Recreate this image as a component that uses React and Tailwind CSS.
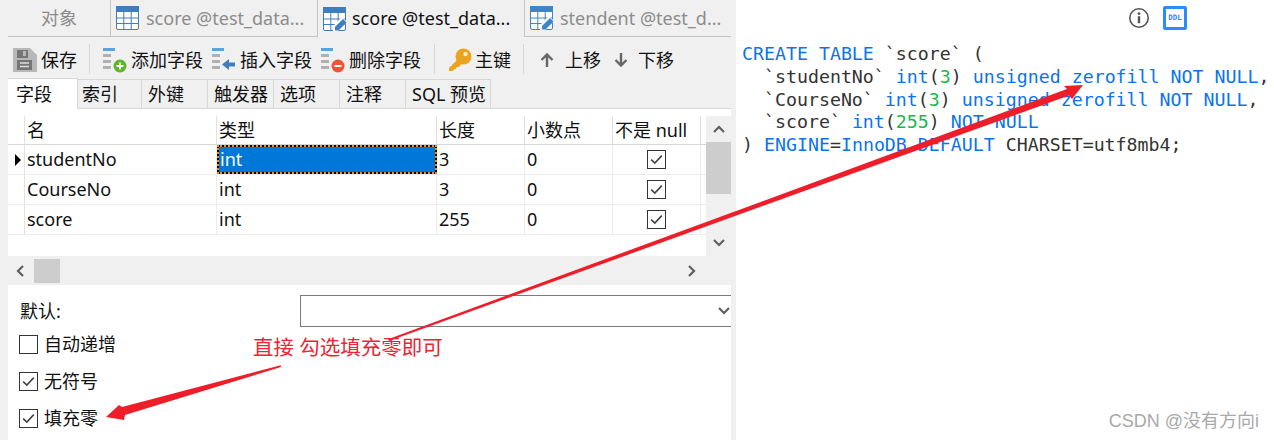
const uiFont = { fontFamily: '"Noto Sans", "Noto Sans CJK SC", sans-serif' };

function TableIcon({ edit = false, dim = false }) {
  const c = dim ? "#3d87c9" : "#3d7fbd";
  return (
    <svg width="26" height="26" viewBox="0 0 26 26" className="shrink-0">
      <rect x="1.5" y="1.5" width="22" height="23" rx="1.5" fill="#fff" stroke={c} />
      <rect x="1" y="1" width="23" height="6" fill={c} />
      <path d="M1.5 13h22M1.5 18.5h22M8.8 7v17M16.2 7v17" stroke={c} strokeWidth="1" fill="none" />
      {edit && (
        <>
          <path d="M11 25v-5L20 11l5 5-9 9z" fill="#fff" />
          <path d="M13 24.5v-3.5l8-8 3.5 3.5-8 8z" fill={c} />
        </>
      )}
    </svg>
  );
}

function FieldIcon({ children }) {
  return (
    <svg width="26" height="26" viewBox="0 0 26 26" className="shrink-0">
      <rect x="1" y="1" width="12" height="3" fill="#59a5df" />
      <rect x="1" y="7" width="8" height="3" fill="#b0b0b0" />
      <rect x="1" y="13" width="8" height="3" fill="#b0b0b0" />
      <rect x="1" y="19" width="8" height="3" fill="#b0b0b0" />
      {children}
    </svg>
  );
}

function Tool({ icon, label, className = "" }) {
  return (
    <div className={"flex items-center gap-[3px] text-[18px] text-[#111] " + className}>
      {icon}
      <span>{label}</span>
    </div>
  );
}

function Check({ checked = true, className = "" }) {
  return (
    <span className={"flex h-[19px] w-[19px] shrink-0 items-center justify-center border border-[#333] bg-white " + className}>
      {checked && (
        <svg width="13" height="11" viewBox="0 0 13 11">
          <path d="M1.2 5.6 4.8 9 11.8 1.6" fill="none" stroke="#444" strokeWidth="1.6" />
        </svg>
      )}
    </span>
  );
}

function Chevron({ d, className = "", w = 12, h = 10 }) {
  return (
    <svg width={w} height={h} viewBox={`0 0 ${w} ${h}`} className={className}>
      <path d={d} fill="none" stroke="#606060" strokeWidth="2.2" />
    </svg>
  );
}

const rows = [
  { name: "studentNo", len: "3", selected: true },
  { name: "CourseNo", len: "3" },
  { name: "score", len: "255" },
];

const subTabs = [
  ["索引", "w-[64px] pl-[4px]"],
  ["外键", "w-[66px] pl-[6px]"],
  ["触发器", "w-[66px] pl-[6px]"],
  ["选项", "w-[66px] pl-[6px]"],
  ["注释", "w-[66px] pl-[6px]"],
  ["SQL 预览", "w-[85px] pl-[6px]"],
];

const cols = "grid grid-cols-[17px_192px_220px_88px_88px_88px_5px]";

function FieldTable() {
  return (
    <div className="h-[147px] w-[698px] bg-white pt-[7px] text-[18px] text-[#111]">
      <div className={cols + " h-[29px] border-b border-[#d8d8d8]"}>
        <div className="border-r border-[#e2e2e2]" />
        {["名", "类型", "长度", "小数点", "不是 null"].map((h) => (
          <div key={h} className="border-r border-[#e2e2e2] pl-[2px] leading-[28px]">{h}</div>
        ))}
        <div />
      </div>
      {rows.map((r) => (
        <div key={r.name} className={cols + " h-[30px] border-b border-[#ececec]"}>
          <div className="flex items-center justify-end border-r border-[#e2e2e2] pr-[3px]">
            {r.selected && <span className="h-0 w-0 border-y-[6px] border-l-[6px] border-y-transparent border-l-black" />}
          </div>
          <div className="border-r border-[#ececec] pl-[2px] leading-[29px]">{r.name}</div>
          {r.selected ? (
            <div className="h-[29px] border-2 border-dotted border-[#f08a1d] bg-black">
              <div className="h-full bg-[#0078d7] pl-[1px] leading-[25px] text-white">int</div>
            </div>
          ) : (
            <div className="border-r border-[#ececec] pl-[2px] leading-[29px]">int</div>
          )}
          <div className="border-r border-[#ececec] pl-[2px] leading-[29px]">{r.len}</div>
          <div className="border-r border-[#ececec] pl-[2px] leading-[29px]">0</div>
          <div className="flex items-center justify-center border-r border-[#ececec]"><Check /></div>
          <div />
        </div>
      ))}
    </div>
  );
}

function LeftPanel() {
  return (
    <div className="flex h-[440px] w-[736px] shrink-0 flex-col bg-[#f0f0f0] pl-2 pr-[5px]" style={uiFont}>
      {/* top tabs */}
      <div className="flex h-[37px] w-[723px] border-b border-[#c4c4c4] text-[18px]">
        <div className="flex w-[103px] items-center justify-center border-r border-[#c4c4c4] text-[#8c8c8c]">对象</div>
        <div className="flex w-[207px] items-center gap-[5px] border-r border-[#c4c4c4] pl-[4px] text-[#8c8c8c]">
          <TableIcon />
          <span>score @test_data...</span>
        </div>
        <div className="-mb-px flex w-[206px] items-center gap-[4px] bg-[#f0f0f0] pl-[4px] text-[#111]">
          <TableIcon edit />
          <span>score @test_data...</span>
        </div>
        <div className="flex w-[207px] items-center gap-[5px] border-l border-[#c4c4c4] pl-[4px] text-[#8c8c8c]">
          <TableIcon edit dim />
          <span>stendent @test_d...</span>
        </div>
      </div>

      {/* toolbar */}
      <div className="flex h-[42px] items-center pl-[5px] pt-[4px]">
        <Tool
          label="保存"
          className="gap-[4px]"
          icon={
            <svg width="24" height="24" viewBox="0 0 24 24" className="shrink-0">
              <path d="M0 0h17l7 7v17H0z" fill="#b8b8b8" />
              <rect x="4" y="2" width="11" height="8" fill="#757575" />
              <rect x="10" y="3" width="3" height="5" fill="#b8b8b8" />
              <rect x="4" y="12" width="15" height="10" fill="#757575" />
              <path d="M7 15h9M7 18.5h9" stroke="#ddd" strokeWidth="1.5" />
            </svg>
          }
        />
        <div className="-mt-[2px] ml-[12px] h-[30px] w-px bg-[#d8d8d8]" />
        <Tool
          className="ml-[12px]"
          label="添加字段"
          icon={
            <FieldIcon>
              <circle cx="18" cy="19" r="6.5" fill="#5db52f" />
              <path d="M14.5 19h7M18 15.5v7" stroke="#fff" strokeWidth="1.8" />
            </FieldIcon>
          }
        />
        <Tool
          className="ml-[8px]"
          label="插入字段"
          icon={
            <FieldIcon>
              <path d="M11 17.5 18 12v3.5h6v4h-6V23z" fill="#3d7fbd" />
            </FieldIcon>
          }
        />
        <Tool
          className="ml-[8px]"
          label="删除字段"
          icon={
            <FieldIcon>
              <circle cx="18" cy="19" r="6.5" fill="#ef5338" />
              <path d="M14.5 19h7" stroke="#fff" strokeWidth="2" />
            </FieldIcon>
          }
        />
        <div className="-mt-[2px] ml-[13px] h-[30px] w-px bg-[#d8d8d8]" />
        <Tool
          className="ml-[13px]"
          label="主键"
          icon={
            <svg width="24" height="24" viewBox="0 0 24 24" className="shrink-0">
              <circle cx="15.5" cy="8.5" r="8" fill="#eba41f" />
              <circle cx="17.5" cy="6" r="2.2" fill="#fbe9bf" />
              <path d="M10 11 1 20v3h4l1-2h2l1-2h2l3-4z" fill="#eba41f" />
            </svg>
          }
        />
        <div className="-mt-[2px] ml-[12px] h-[30px] w-px bg-[#d8d8d8]" />
        <Tool
          className="ml-[16px] gap-[11px]"
          label="上移"
          icon={
            <svg width="14" height="14" viewBox="0 0 14 14" className="shrink-0">
              <path d="M1.5 7 7 1.5 12.5 7M7 2v12" fill="none" stroke="#666" strokeWidth="2.4" />
            </svg>
          }
        />
        <Tool
          className="ml-[13px] gap-[10px]"
          label="下移"
          icon={
            <svg width="14" height="14" viewBox="0 0 14 14" className="shrink-0">
              <path d="M1.5 7 7 12.5 12.5 7M7 12V0" fill="none" stroke="#666" strokeWidth="2.4" />
            </svg>
          }
        />
      </div>

      {/* field tabs */}
      <div className="flex h-[30px] w-[723px] items-end border-b border-[#d8d8d8] text-[18px] text-[#111]">
        <div className="-mb-px flex h-[31px] w-[70px] items-center border-r border-t border-[#d8d8d8] bg-white pl-[8px]">字段</div>
        {subTabs.map(([t, w]) => (
          <div key={t} className={"flex h-[29px] items-center border-r border-t border-[#d8d8d8] " + w}>{t}</div>
        ))}
      </div>

      {/* table with its scroll bars */}
      <div className="flex h-[176px] w-[723px] bg-[#f0f0f0]">
        <div className="flex w-[698px] flex-col">
          <FieldTable />
          <div className="flex h-[29px] items-center">
            <Chevron w={10} h={14} d="M8 2 3 7l5 5" className="ml-[7px]" />
            <div className="ml-[9px] h-[24px] w-[26px] bg-[#cdcdcd]" />
            <Chevron w={10} h={14} d="M2 2l5 5-5 5" className="ml-[627px]" />
          </div>
        </div>
        <div className="flex w-[25px] flex-col">
          <div className="h-[7px] bg-white" />
          <div className="flex h-[26px] items-center justify-center"><Chevron d="M1 8l5-5 5 5" /></div>
          <div className="h-[52px] bg-[#cdcdcd]" />
          <div className="mt-[36px] flex h-[26px] items-center justify-center"><Chevron d="M1 2l5 5 5-5" /></div>
        </div>
      </div>

      {/* options */}
      <div className="flex-1 overflow-hidden bg-white text-[18px] text-[#111]">
        <div className="mt-[10px] flex h-[32px] items-center pl-[12px]">
          <span className="w-[280px]">默认:</span>
          <div className="flex h-[32px] flex-1 items-center justify-end border border-r-0 border-[#7a7a7a] pr-[1px]">
            <Chevron d="M1 2l5 5 5-5" />
          </div>
        </div>
        <div className="mt-[6px] flex h-[22px] items-center gap-[6px] pl-[11px]"><Check checked={false} />自动递增</div>
        <div className="mt-[15px] flex h-[22px] items-center gap-[6px] pl-[11px]"><Check />无符号</div>
        <div className="mt-[15px] flex h-[22px] items-center gap-[6px] pl-[11px]"><Check />填充零</div>
      </div>
    </div>
  );
}

const K = ({ children }) => <span className="text-[#0a74f0]">{children}</span>;
const N = ({ children }) => <span className="text-[#19b84a]">{children}</span>;

function RightPanel() {
  return (
    <div className="relative flex-1 bg-white">
      <div className="flex h-[36px] items-center justify-end gap-[13px] pr-[87px]">
        <svg width="22" height="22" viewBox="0 0 22 22">
          <circle cx="11" cy="11" r="9.2" fill="none" stroke="#555" strokeWidth="1.6" />
          <circle cx="11" cy="6.6" r="1.4" fill="#555" />
          <rect x="9.8" y="9.2" width="2.4" height="7" fill="#555" />
        </svg>
        <div className="flex h-[24px] w-[24px] items-center justify-center rounded-[2px] border-[3px] border-[#2b8cff] text-[7.5px] font-bold leading-none text-[#2b8cff]" style={{ fontFamily: '"DejaVu Sans Mono", monospace' }}>
          DDL
        </div>
      </div>
      <pre className="mt-[7px] pl-[6px] text-[18.26px] leading-[22.8px] text-[#333]" style={{ fontFamily: '"DejaVu Sans Mono", monospace' }}>
        <K>CREATE TABLE</K>{" `score` (\n"}
        {"  `studentNo` "}<K>int</K>(<N>3</N>) <K>unsigned zerofill NOT NULL</K>{",\n"}
        {"  `CourseNo` "}<K>int</K>(<N>3</N>) <K>unsigned zerofill NOT NULL</K>{",\n"}
        {"  `score` "}<K>int</K>(<N>255</N>) <K>NOT NULL</K>{"\n"}
        {") "}<K>ENGINE</K>=<K>InnoDB DEFAULT</K>{" CHARSET=utf8mb4;"}
      </pre>
      <div className="absolute bottom-[5px] right-[15px] text-[18px] text-[#a9a9a9]" style={{ fontFamily: '"Liberation Sans", "Noto Sans CJK SC", sans-serif' }}>
        CSDN @没有方向i
      </div>
    </div>
  );
}

export default function App() {
  return (
    <div className="relative h-[440px] w-[1274px] overflow-hidden">
      <div className="flex h-full">
        <LeftPanel />
        <RightPanel />
      </div>
      {/* hand drawn annotation over the screenshot */}
      <svg width="1274" height="440" viewBox="0 0 1274 440" className="pointer-events-none absolute left-0 top-0">
        <path d="M388 339.2 1067 89 1064 86 1083 85 1072 99 1069 95.5 389 341z" fill="#ee1d2a" />
        <path d="M280.6 365.2 122 407 119 405 106 417 124 420 125 415 281 367z" fill="#ee1d2a" />
      </svg>
      <div className="absolute left-[253px] top-[333px] text-[20.5px] leading-[28px] text-[#ee2433]" style={uiFont}>
        直接 勾选填充零即可
      </div>
    </div>
  );
}
